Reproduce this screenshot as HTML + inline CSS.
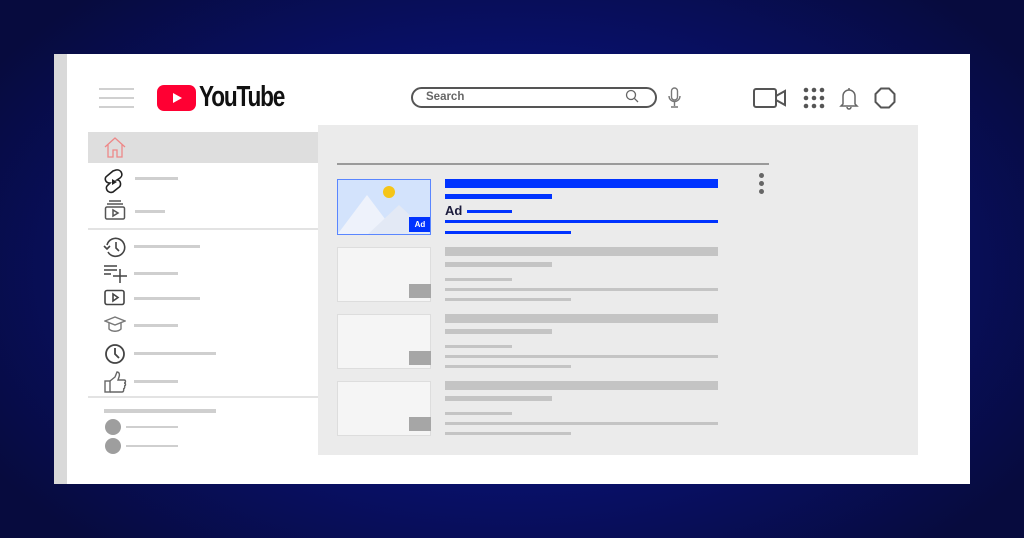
<!DOCTYPE html>
<html><head><meta charset="utf-8"><style>
*{margin:0;padding:0;box-sizing:border-box}
body{width:1024px;height:538px;overflow:hidden;background:radial-gradient(ellipse 60% 70% at 50% 50%,#0a1590 0%,#08106a 55%,#070b3e 100%);position:relative;font-family:"Liberation Sans",sans-serif}
.a{position:absolute}
.l{position:absolute;height:3px;background:#cfcfcf}
.b{position:absolute;background:#0033ff}
.g{position:absolute;background:#c4c4c4}
</style></head><body>
<div class="a" style="left:54px;top:54px;width:916px;height:430px;background:#fff"></div>
<div class="a" style="left:54px;top:54px;width:13px;height:430px;background:#d9d9d9"></div>
<div class="a" style="left:318px;top:125px;width:600px;height:330px;background:#ebebeb"></div>
<div class="a" style="left:88px;top:132px;width:230px;height:31px;background:#dedede"></div>
<div class="a" style="left:88px;top:228px;width:230px;height:2px;background:#e3e3e3"></div>
<div class="a" style="left:88px;top:396px;width:230px;height:2px;background:#e3e3e3"></div>
<!-- hamburger -->
<div class="a" style="left:99px;top:88px;width:35px;height:2px;background:#d0d0d0"></div>
<div class="a" style="left:99px;top:97px;width:35px;height:2px;background:#d0d0d0"></div>
<div class="a" style="left:99px;top:106px;width:35px;height:2px;background:#d0d0d0"></div>
<!-- logo -->
<div class="a" style="left:157px;top:85px;width:39px;height:26px;background:#ff0033;border-radius:7px"></div>
<svg class="a" style="left:157px;top:85px" width="39" height="26"><polygon points="16,8 16,18 25,13" fill="#fff"/></svg>
<div class="a" style="left:199px;top:81px;font-size:29px;font-weight:bold;color:#111;letter-spacing:-1.5px;transform:scaleX(0.78);transform-origin:left top">YouTube</div>
<!-- search -->
<div class="a" style="left:411px;top:87px;width:246px;height:21px;border:2px solid #555;border-radius:11px"></div>
<div class="a" style="left:426px;top:91px;font-size:11.5px;color:#666;font-weight:bold">Search</div>
<svg class="a" style="left:624px;top:88px" width="18" height="18" fill="none" stroke="#666" stroke-width="1.3"><circle cx="7" cy="7" r="4.5"/><line x1="10.5" y1="10.5" x2="14" y2="14"/></svg>
<svg class="a" style="left:666px;top:86px" width="18" height="24" fill="none" stroke="#777" stroke-width="1.4"><rect x="5.5" y="2" width="6" height="12" rx="3"/><path d="M3 10a5.5 5.5 0 0 0 11 0M8.5 16v4M5 21h7"/></svg>
<!-- right icons -->
<svg class="a" style="left:752px;top:87px" width="36" height="22" fill="none" stroke="#555" stroke-width="2"><rect x="2" y="2" width="22" height="18" rx="2"/><path d="M24 9l9-5v14l-9-5z"/></svg>
<svg class="a" style="left:803px;top:87px" width="22" height="22" fill="#555"><circle cx="3" cy="3" r="2.3"/><circle cx="11" cy="3" r="2.3"/><circle cx="19" cy="3" r="2.3"/><circle cx="3" cy="11" r="2.3"/><circle cx="11" cy="11" r="2.3"/><circle cx="19" cy="11" r="2.3"/><circle cx="3" cy="19" r="2.3"/><circle cx="11" cy="19" r="2.3"/><circle cx="19" cy="19" r="2.3"/></svg>
<svg class="a" style="left:838px;top:86px" width="22" height="24" fill="none" stroke="#666" stroke-width="1.5"><path d="M11 2v2M5 18V10a6 6 0 0 1 12 0v8l2 2H3z"/><path d="M9 21a2 2 0 0 0 4 0"/></svg>
<svg class="a" style="left:874px;top:87px" width="22" height="22" fill="none" stroke="#555" stroke-width="2"><polygon points="7,1.5 15,1.5 20.5,7 20.5,15 15,20.5 7,20.5 1.5,15 1.5,7"/></svg>
<!-- sidebar icons -->
<svg class="a" style="left:103px;top:136px" width="24" height="24" fill="none" stroke="#e88" stroke-width="1.3"><path d="M2 11L12 2l10 9M5 8.5V21h5v-7h4v7h5V8.5"/></svg>
<svg class="a" style="left:103px;top:168px" width="22" height="28" fill="none" stroke="#222" stroke-width="1.6"><path d="M13 2c5-1 8 5 4 8l-3 2c4 0 5 6 1 8l-5 4c-5 2-9-4-5-7l2-2C2 15 1 10 4 8l6-5z"/><polygon points="9,11 9,17 14,14" fill="#222" stroke="none"/></svg>
<svg class="a" style="left:104px;top:199px" width="22" height="22" fill="none" stroke="#555" stroke-width="1.5"><path d="M5 2h12M3 5h16"/><rect x="1.5" y="8" width="19" height="12" rx="1.5"/><polygon points="9,11 9,17 14,14"/></svg>
<svg class="a" style="left:103px;top:236px" width="24" height="24" fill="none" stroke="#444" stroke-width="1.6"><path d="M4 9a9 9 0 1 1 1 7"/><path d="M1 10l3 3 3-3M13 6v6l3 3"/></svg>
<svg class="a" style="left:104px;top:264px" width="24" height="20" fill="none" stroke="#444" stroke-width="1.5"><path d="M0 2h13M0 6h13M0 10h7M16 5v14M9 12h14"/></svg>
<svg class="a" style="left:104px;top:289px" width="22" height="18" fill="none" stroke="#444" stroke-width="1.6"><rect x="1" y="1.5" width="19" height="14" rx="2"/><polygon points="9,5 9,12 14,8.5"/></svg>
<svg class="a" style="left:104px;top:316px" width="22" height="18" fill="none" stroke="#777" stroke-width="1.4"><path d="M1 5l10-4 10 4-10 4z"/><path d="M5 7v6c3 3 9 3 12 0V7"/></svg>
<svg class="a" style="left:104px;top:343px" width="22" height="22" fill="none" stroke="#444" stroke-width="1.8"><circle cx="11" cy="11" r="9"/><path d="M11 5v6l4 4"/></svg>
<svg class="a" style="left:104px;top:371px" width="24" height="22" fill="none" stroke="#666" stroke-width="1.4"><rect x="1" y="10" width="5" height="11"/><path d="M6 10l5-4 2-5c2 0 3 2 2 5l-1 3h6c2 0 2 3 0 3 2 0 2 3 0 3 1 0 1 3-1 3 1 0 1 3-1 3H6"/></svg>
<div class="l" style="left:135px;top:177px;width:43px"></div>
<div class="l" style="left:135px;top:210px;width:30px"></div>
<div class="l" style="left:134px;top:245px;width:66px"></div>
<div class="l" style="left:134px;top:272px;width:44px"></div>
<div class="l" style="left:134px;top:297px;width:66px"></div>
<div class="l" style="left:134px;top:324px;width:44px"></div>
<div class="l" style="left:134px;top:352px;width:82px"></div>
<div class="l" style="left:134px;top:380px;width:44px"></div>
<div class="l" style="left:104px;top:409px;width:112px;height:4px"></div>
<div class="a" style="left:105px;top:419px;width:16px;height:16px;border-radius:50%;background:#9e9e9e"></div>
<div class="a" style="left:105px;top:438px;width:16px;height:16px;border-radius:50%;background:#9e9e9e"></div>
<div class="l" style="left:126px;top:426px;width:52px;height:2px"></div>
<div class="l" style="left:126px;top:445px;width:52px;height:2px"></div>
<!-- content -->
<div class="a" style="left:337px;top:163px;width:432px;height:2px;background:#9a9a9a"></div>
<div class="a" style="left:337px;top:179px;width:94px;height:56px;background:#d3e3fc;border:1.5px solid #5a86ff;overflow:hidden">
<svg width="94" height="56" style="position:absolute;left:-1px;top:-1px"><polygon points="0,56 30,16 60,56" fill="#eef2fb"/><polygon points="30,56 62,26 94,56" fill="#e3e9f5"/><circle cx="52" cy="13" r="6" fill="#f5c518"/></svg>
<div class="a" style="right:-1px;top:37px;width:22px;height:15px;background:#0033ff;color:#fff;font-size:8px;font-weight:bold;text-align:center;line-height:15px">Ad</div></div>
<div class="b" style="left:445px;top:179px;width:273px;height:9px"></div>
<div class="b" style="left:445px;top:194px;width:107px;height:5px"></div>
<div class="a" style="left:445px;top:203px;font-size:13px;color:#1c1c3c;font-weight:bold">Ad</div>
<div class="b" style="left:467px;top:210px;width:45px;height:3px"></div>
<div class="b" style="left:445px;top:220px;width:273px;height:3px"></div>
<div class="b" style="left:445px;top:231px;width:126px;height:3px"></div>
<div class="a" style="left:759px;top:173px;width:5px;height:5px;border-radius:50%;background:#666"></div>
<div class="a" style="left:759px;top:181px;width:5px;height:5px;border-radius:50%;background:#666"></div>
<div class="a" style="left:759px;top:189px;width:5px;height:5px;border-radius:50%;background:#666"></div>

<div class="a" style="left:337px;top:247px;width:94px;height:55px;background:#f5f5f5;border:1px solid #ddd"></div>
<div class="a" style="left:409px;top:284px;width:22px;height:14px;background:#a6a6a6"></div>
<div class="g" style="left:445px;top:247px;width:273px;height:9px"></div>
<div class="g" style="left:445px;top:262px;width:107px;height:5px"></div>
<div class="g" style="left:445px;top:278px;width:67px;height:3px"></div>
<div class="g" style="left:445px;top:288px;width:273px;height:3px"></div>
<div class="g" style="left:445px;top:298px;width:126px;height:3px"></div>

<div class="a" style="left:337px;top:314px;width:94px;height:55px;background:#f5f5f5;border:1px solid #ddd"></div>
<div class="a" style="left:409px;top:351px;width:22px;height:14px;background:#a6a6a6"></div>
<div class="g" style="left:445px;top:314px;width:273px;height:9px"></div>
<div class="g" style="left:445px;top:329px;width:107px;height:5px"></div>
<div class="g" style="left:445px;top:345px;width:67px;height:3px"></div>
<div class="g" style="left:445px;top:355px;width:273px;height:3px"></div>
<div class="g" style="left:445px;top:365px;width:126px;height:3px"></div>

<div class="a" style="left:337px;top:381px;width:94px;height:55px;background:#f5f5f5;border:1px solid #ddd"></div>
<div class="a" style="left:409px;top:417px;width:22px;height:14px;background:#a6a6a6"></div>
<div class="g" style="left:445px;top:381px;width:273px;height:9px"></div>
<div class="g" style="left:445px;top:396px;width:107px;height:5px"></div>
<div class="g" style="left:445px;top:412px;width:67px;height:3px"></div>
<div class="g" style="left:445px;top:422px;width:273px;height:3px"></div>
<div class="g" style="left:445px;top:432px;width:126px;height:3px"></div>
</body></html>
